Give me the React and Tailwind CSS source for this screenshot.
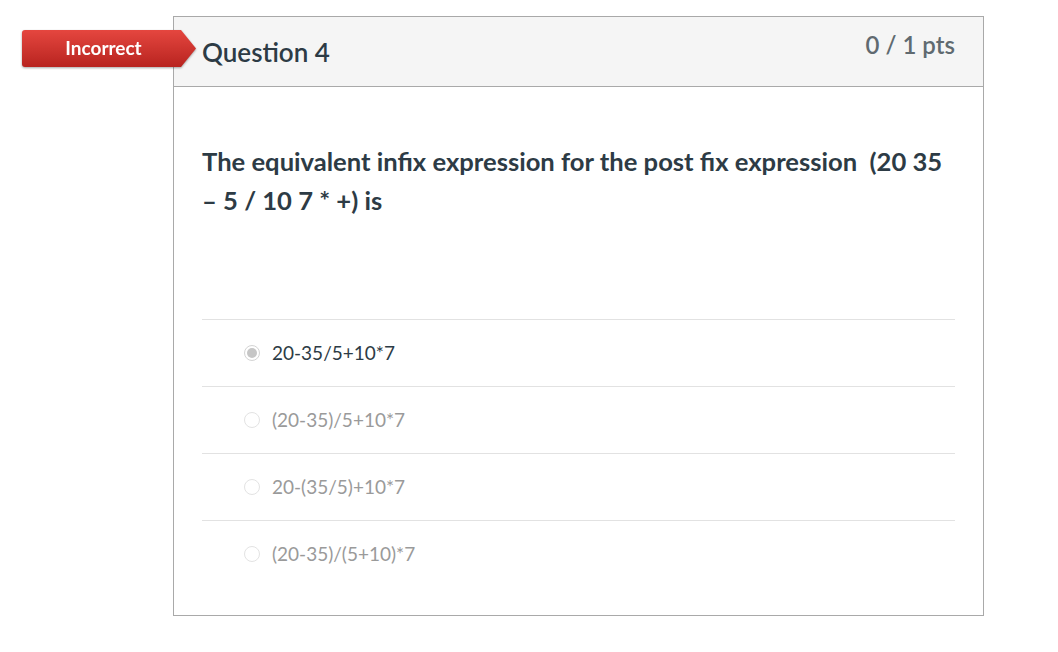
const answers = [
  { text: "20-35/5+10*7", selected: true },
  { text: "(20-35)/5+10*7", selected: false },
  { text: "20-(35/5)+10*7", selected: false },
  { text: "(20-35)/(5+10)*7", selected: false },
];

function Radio({ selected }) {
  if (selected) {
    return (
      <span className="flex h-4 w-4 items-center justify-center rounded-full border border-[#d4d4d4] bg-white">
        <span className="h-[10px] w-[10px] rounded-full bg-[#c6c6c6]" />
      </span>
    );
  }
  return <span className="h-4 w-4 rounded-full border border-[#e3e3e3] bg-white" />;
}

function Badge() {
  return (
    <div className="absolute left-[-152px] top-[13px] z-10 flex h-[37px] w-[174px] drop-shadow-[0_1px_1px_rgba(0,0,0,0.35)]">
      <div className="flex h-full w-[159px] items-center justify-center rounded-l-[3px] bg-gradient-to-b from-[#e5463f] to-[#b8231f] pb-[3px] pl-[4px] text-[19px] font-bold leading-none text-white">
        Incorrect
      </div>
      <svg width="15" height="37" viewBox="0 0 15 37" className="block">
        <defs>
          <linearGradient id="bg" x1="0" y1="0" x2="0" y2="1">
            <stop offset="0" stopColor="#e5463f" />
            <stop offset="1" stopColor="#b8231f" />
          </linearGradient>
        </defs>
        <polygon points="0,0 15,18.5 0,37" fill="url(#bg)" />
      </svg>
    </div>
  );
}

export default function App() {
  return (
    <div className="min-h-screen bg-white pl-[173px] pt-[16px] font-['Lato','Open_Sans',sans-serif] text-[#2d3b45]">
      <div className="relative w-[811px] border border-[#a9a9a9]">
        <Badge />
        <div className="flex h-[70px] items-start justify-between border-b border-[#a9a9a9] bg-[#f5f5f5] px-[28px]">
          <h2 className="pt-[19px] text-[26px] font-semibold leading-[32px]">Question 4</h2>
          <div className="pt-[14px] text-[24px] font-semibold leading-[28px] text-[#606a70]">0 / 1 pts</div>
        </div>
        <div className="px-[28px] pb-[28px]">
          <p className="pt-[55px] text-[25.6px] font-bold leading-[39px]">
            The equivalent infix expression for the post fix expression{"\u00a0"} (20 35 – 5 / 10 7 * +) is
          </p>
          <div className="mt-[99px]">
            {answers.map((a) => (
              <div
                key={a.text}
                className="flex h-[67px] items-center gap-[12px] border-t border-[#e2e2e2] pl-[42px]"
              >
                <Radio selected={a.selected} />
                <span className={"text-[19px] " + (a.selected ? "text-[#2d3b45]" : "text-[#9a9a9a]")}>
                  {a.text}
                </span>
              </div>
            ))}
          </div>
        </div>
      </div>
    </div>
  );
}
